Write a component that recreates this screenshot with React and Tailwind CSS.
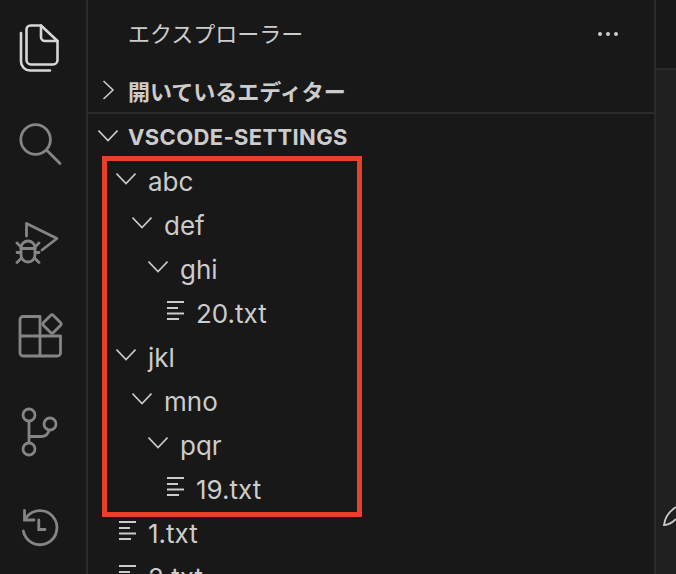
const FilesIcon = () => (
  <svg width="56" height="56" viewBox="12 18 56 56" fill="none" stroke="#d7d7d7" strokeWidth="2.6" strokeLinejoin="round" strokeLinecap="round">
    <path d="M30.5 25.5H41L57.5 41V60a4.5 4.5 0 0 1-4.5 4.5H31a4.5 4.5 0 0 1-4.5-4.5V29.5a4 4 0 0 1 4-4Z" />
    <path d="M41 25.5V37a4 4 0 0 0 4 4H57.5" />
    <path d="M21 33v28.5a9 9 0 0 0 9 9H50" />
  </svg>
)

const SearchIcon = () => (
  <svg width="56" height="56" viewBox="12 114 56 56" fill="none" stroke="#858585" strokeWidth="2.8" strokeLinecap="round">
    <circle cx="35.6" cy="139.5" r="14.8" />
    <path d="M47 150.5 60 163.5" />
  </svg>
)

const DebugIcon = () => (
  <svg width="56" height="56" viewBox="12 210 56 56" fill="none" stroke="#858585" strokeWidth="2.8" strokeLinecap="round" strokeLinejoin="round">
    <path d="M26.5 236V223.5L57 238.5 42 250" />
    <rect x="21" y="241" width="14" height="21" rx="7" />
    <path d="M21 248.5H35" />
    <path d="M17 243 21 247M39 243 35 247M17 252.5H21M39 252.5H35M17 262.5 21 258.5M39 262.5 35 258.5" />
  </svg>
)

const ExtensionsIcon = () => (
  <svg width="56" height="56" viewBox="12 306 56 56" fill="none" stroke="#858585" strokeWidth="2.8" strokeLinejoin="round">
    <path d="M23 316.5H40V336H60.5V353a3 3 0 0 1-3 3H23a3 3 0 0 1-3-3V319.5a3 3 0 0 1 3-3Z" />
    <path d="M20 336H40V356" />
    <rect x="45" y="317" width="14" height="14" rx="2" transform="rotate(45 52 324)" />
  </svg>
)

const GitIcon = () => (
  <svg width="56" height="56" viewBox="12 402 56 56" fill="none" stroke="#858585" strokeWidth="2.8">
    <circle cx="29" cy="415" r="6" />
    <circle cx="50" cy="424" r="6" />
    <circle cx="29" cy="449" r="6" />
    <path d="M29 421V443M29 436.5H42a8 8 0 0 0 7-6.5" />
  </svg>
)

const TimelineIcon = () => (
  <svg width="56" height="56" viewBox="12 498 56 56" fill="none" stroke="#858585" strokeWidth="2.8" strokeLinecap="round">
    <path d="M26 518A17 17 0 1 1 23.3 531" />
    <path d="M24.5 510.5V520H34" />
    <path d="M38.8 520V529.5H45" />
  </svg>
)

const ChevronRight = () => (
  <svg width="20" height="20" viewBox="0 0 20 20" fill="none" stroke="#cccccc" strokeWidth="1.6">
    <path d="M5.5 1 15 10 5.5 19" />
  </svg>
)

const ChevronDown = () => (
  <svg width="20" height="20" viewBox="0 0 20 20" fill="none" stroke="#cccccc" strokeWidth="1.6">
    <path d="M0.5 4.5 10 14.5 19.5 4.5" />
  </svg>
)

const FileLines = () => (
  <svg width="20" height="20" viewBox="0 0 20 20" fill="none" stroke="#cccccc" strokeWidth="2">
    <path d="M3 1H20M3 7H14M3 12.5H20M3 18H15" />
  </svg>
)

const depthClass = ['pl-[28px]', 'pl-[44px]', 'pl-[60px]', 'pl-[76px]']

const tree = [
  { name: 'abc', depth: 0, folder: true },
  { name: 'def', depth: 1, folder: true },
  { name: 'ghi', depth: 2, folder: true },
  { name: '20.txt', depth: 3 },
  { name: 'jkl', depth: 0, folder: true },
  { name: 'mno', depth: 1, folder: true },
  { name: 'pqr', depth: 2, folder: true },
  { name: '19.txt', depth: 3 },
  { name: '1.txt', depth: 0 },
  { name: '2.txt', depth: 0 },
]

const App = () => {
  return (
    <div className="flex h-[574px] w-[676px] overflow-hidden bg-[#181818] text-[#cccccc] font-['Inter','Noto_Sans_CJK_JP',sans-serif]">
      {/* Activity bar */}
      <div className="flex w-[88px] shrink-0 flex-col border-r-2 border-[#2b2b2b]">
        {[FilesIcon, SearchIcon, DebugIcon, ExtensionsIcon, GitIcon, TimelineIcon].map((Icon, i) => (
          <div key={i} className="flex h-[96px] w-[80px] shrink-0 items-center justify-center first:-mt-[2px]">
            <Icon />
          </div>
        ))}
      </div>

      {/* Sidebar */}
      <div className="relative w-[568px] shrink-0 border-r-2 border-[#2b2b2b]">
        <div className="flex h-[68px] items-center justify-between pl-[40px] pr-[36px] text-[22px]">
          <span className="pt-[1px]">エクスプローラー</span>
          <div className="flex gap-[4px]">
            <span className="h-[4px] w-[4px] rounded-full bg-[#cccccc]" />
            <span className="h-[4px] w-[4px] rounded-full bg-[#cccccc]" />
            <span className="h-[4px] w-[4px] rounded-full bg-[#cccccc]" />
          </div>
        </div>
        <div className="flex h-[46px] items-center gap-[10px] border-b-2 border-[#2b2b2b] pl-[10px] text-[22px] font-bold">
          <ChevronRight />
          <span className="pt-[4px]">開いているエディター</span>
        </div>
        <div className="flex h-[43px] items-center gap-[10px] pl-[10px] text-[22px] font-bold">
          <ChevronDown />
          <span className="pt-[4px] tracking-[0.35px]">VSCODE-SETTINGS</span>
        </div>

        {tree.map((item) => (
          <div key={item.name} className={`flex h-[44px] items-center gap-[12px] text-[26px] ${depthClass[item.depth]}`}>
            {item.folder ? <ChevronDown /> : <FileLines />}
            <span className="pt-[4px]">{item.name}</span>
          </div>
        ))}

        {/* Red annotation box */}
        <div className="absolute left-[14px] top-[156px] h-[361px] w-[260px] border-[5px] border-[#e8412a]" />
      </div>

      {/* Editor edge */}
      <div className="flex min-w-0 flex-1 flex-col">
        <div className="h-[70px] shrink-0 border-b-2 border-[#2b2b2b] bg-[#181818]" />
        <div className="flex-1 bg-[#1f1f1f] pl-[6px] pt-[435px]">
          <svg width="16" height="24" viewBox="0 0 16 24" fill="none" stroke="#cccccc" strokeWidth="1.8" className="block">
            <path d="M14 2C8 6 3 11 2 20 7 20 11 17 14 14" />
          </svg>
        </div>
      </div>
    </div>
  )
}

export default App
